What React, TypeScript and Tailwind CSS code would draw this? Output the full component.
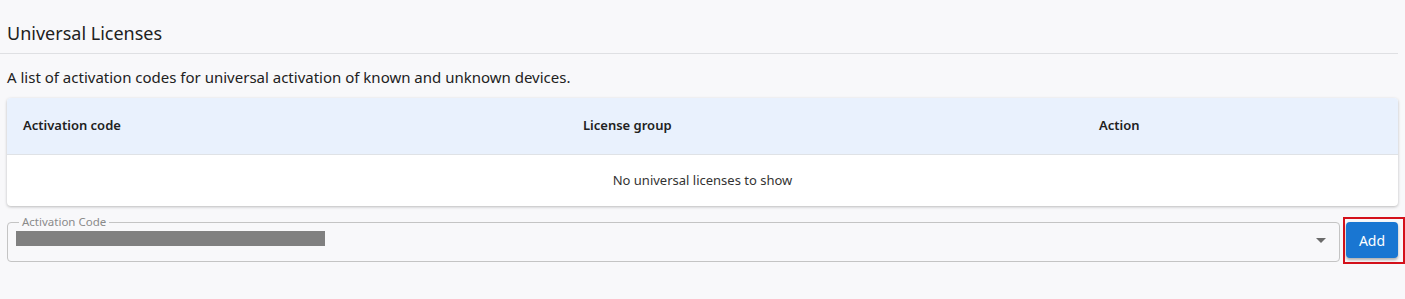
import { ChevronDown } from "lucide-react";

export default function App() {
  return (
    <div className="w-[1405px] h-[299px] bg-[#f8f8fa] text-[#212121] font-['Noto_Sans',sans-serif] overflow-hidden">
      {/* Titulo */}
      <div className="pr-[7px]">
        <h2 className="pl-[7px] pt-[21px] pb-[8px] text-[18px] leading-[24px] border-b border-[#dfe0e3]">
          Universal Licenses
        </h2>
      </div>

      <div className="px-[7px]">
        <p className="mt-[12px] text-[15px] leading-[22px]">
          A list of activation codes for universal activation of known and unknown devices.
        </p>

        {/* Tabla */}
        <div className="mt-[10px] bg-white rounded-[4px] shadow-[0_1px_3px_rgba(0,0,0,0.25)] overflow-hidden">
          <table className="w-full text-[13px]">
            <thead className="bg-[#e9f1fd]">
              <tr className="h-[56px] border-b border-[#dfe2e6]">
                <th className="w-[560px] px-4 text-left font-semibold">Activation code</th>
                <th className="w-[516px] px-4 text-left font-semibold">License group</th>
                <th className="px-4 text-left font-semibold">Action</th>
              </tr>
            </thead>
            <tbody>
              <tr className="h-[52px]">
                <td colSpan={3} className="text-center text-[#333]">
                  No universal licenses to show
                </td>
              </tr>
            </tbody>
          </table>
        </div>

        {/* Formulario */}
        <div className="mt-[10px] -mr-[7px] flex items-start gap-[3px]">
          <fieldset className="flex-1 h-[46px] border border-[#c4c4c4] rounded-[4px] pl-[8px] pr-[13px] flex items-center">
            <legend className="ml-[3px] px-[3px] text-[11.5px] leading-[12px] text-[#8a8a8a]">
              Activation Code
            </legend>
            <div className="flex-1 flex items-center -mt-[12px]">
              <div className="w-[309px] h-[15px] bg-[#808080]"></div>
              <div className="flex-1"></div>
              <svg width="10" height="5" viewBox="0 0 10 5" className="mt-[4px]">
                <path d="M0 0 L10 0 L5 5 Z" fill="#6b6b6b" />
              </svg>
            </div>
          </fieldset>

          <div className="mt-[1px] w-[62px] border-2 border-[#d4111b] pt-[3px] pb-[4px] pl-[1px]">
            <button className="w-[52px] h-[36px] rounded-[4px] bg-[#1976d2] text-white text-[14px] shadow-[0_2px_3px_rgba(0,0,0,0.3)]">
              Add
            </button>
          </div>
        </div>
      </div>
    </div>
  );
}
